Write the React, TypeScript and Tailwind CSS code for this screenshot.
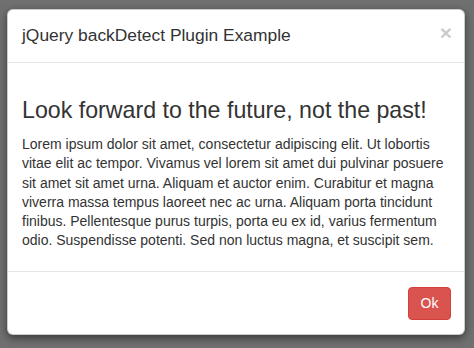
import React from 'react';

const App = () => {
  return (
    <main className="h-[348px] w-[474px] overflow-hidden bg-[#707070] pt-[9px] pl-[7px] font-['Liberation_Sans',Arial,sans-serif] text-[#333]">
      <div className="w-[458px] h-[326px] rounded-[6px] border border-black/20 bg-white shadow-[0_3px_9px_rgba(0,0,0,0.5)] flex flex-col">
        {/* Header */}
        <header className="h-[53px] flex items-center justify-between border-b border-[#e5e5e5] pl-[14px] pr-[12px]">
          <h4 className="text-[17.4px] leading-none -mt-[1px]">jQuery backDetect Plugin Example</h4>
          <button className="text-[21px] font-bold leading-none text-black opacity-20 -mt-[7px]">×</button>
        </header>

        {/* Body */}
        <section className="flex-1 px-[14px] pt-[34px]">
          <h3 className="text-[23.2px] leading-[26px] mb-[12px]">
            Look forward to the future, not the past!
          </h3>
          <p className="text-[14px] leading-[19.3px]">
            Lorem ipsum dolor sit amet, consectetur adipiscing elit. Ut lobortis vitae elit ac tempor. Vivamus vel lorem sit amet dui pulvinar posuere sit amet sit amet urna. Aliquam et auctor enim. Curabitur et magna viverra massa tempus laoreet nec ac urna. Aliquam porta tincidunt finibus. Pellentesque purus turpis, porta eu ex id, varius fermentum odio. Suspendisse potenti. Sed non luctus magna, et suscipit sem.
          </p>
        </section>

        {/* Footer */}
        <footer className="h-[63px] border-t border-[#e5e5e5] flex items-center justify-end pr-[13px]">
          <button className="h-[33px] w-[43px] rounded-[4px] border border-[#d43f3a] bg-[#d9534f] text-[14px] text-white">
            Ok
          </button>
        </footer>
      </div>
    </main>
  );
};

export default App;
